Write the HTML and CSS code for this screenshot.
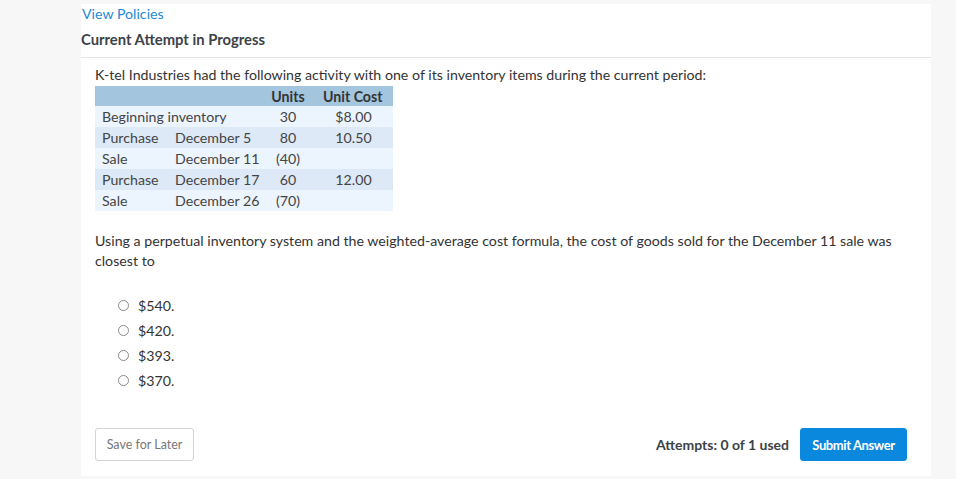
FILE: index.html
```html
<!DOCTYPE html>
<html>
<head>
<meta charset="utf-8">
<link rel="stylesheet" href="styles.css">
</head>
<body>
<div class="card">
  <div class="head">
    <a class="policies" href="#">View Policies</a>
    <div class="title">Current Attempt in Progress</div>
  </div>
  <div class="body">
    <p class="intro">K-tel Industries had the following activity with one of its inventory items during the current period:</p>
    <table class="inv">
      <colgroup><col class="c1"><col class="c2"><col class="c3"><col class="c4"></colgroup>
      <thead>
        <tr><th></th><th></th><th>Units</th><th>Unit Cost</th></tr>
      </thead>
      <tbody>
        <tr><td colspan="2">Beginning inventory</td><td class="n">30</td><td class="n">$8.00</td></tr>
        <tr><td>Purchase</td><td>December 5</td><td class="n">80</td><td class="n">10.50</td></tr>
        <tr><td>Sale</td><td>December 11</td><td class="n">(40)</td><td class="n"></td></tr>
        <tr><td>Purchase</td><td>December 17</td><td class="n">60</td><td class="n">12.00</td></tr>
        <tr><td>Sale</td><td>December 26</td><td class="n">(70)</td><td class="n"></td></tr>
      </tbody>
    </table>
    <p class="question">Using a perpetual inventory system and the weighted-average cost formula, the cost of goods sold for the December 11 sale was closest to</p>
    <ul class="options">
      <li><span class="radio"></span>$540.</li>
      <li><span class="radio"></span>$420.</li>
      <li><span class="radio"></span>$393.</li>
      <li><span class="radio"></span>$370.</li>
    </ul>
    <div class="footer">
      <button class="save">Save for Later</button>
      <div class="right">
        <span class="attempts">Attempts: 0 of 1 used</span>
        <button class="submit">Submit Answer</button>
      </div>
    </div>
  </div>
</div>
</body>
</html>
```

FILE: styles.css
```css
html, body {
  margin: 0;
  padding: 0;
  background: #f7f7f7;
}
body {
  font-family: Lato, "Open Sans", Arial, sans-serif;
  font-size: 14.2px;
  color: #333;
  padding: 4px 25px 3px 81px;
}
.card {
  background: #fff;
  width: 850px;
  height: 472px;
  display: flex;
  flex-direction: column;
}
.head {
  padding: 1px 0 0 1px;
  border-bottom: 1px solid #e5e5e5;
  box-sizing: border-box;
  height: 54px;
}
.policies {
  display: block;
  color: #1b8ad6;
  text-decoration: none;
  line-height: 17px;
}
.title {
  margin-top: 9px;
  font-weight: bold;
  font-size: 14.8px;
  color: #3d4247;
  line-height: 17px;
  margin-left: -1px;
}
.body {
  padding: 7px 14px 0 14px;
  flex: 1;
  display: flex;
  flex-direction: column;
}
.intro {
  margin: 0;
  line-height: 19px;
  color: #333;
}
.inv {
  border-collapse: collapse;
  table-layout: fixed;
  width: 298px;
  margin-top: 2px;
  color: #444;
}
.inv col.c1 { width: 73px; }
.inv col.c2 { width: 94px; }
.inv col.c3 { width: 52px; }
.inv col.c4 { width: 79px; }
.inv th {
  background: #a3c5de;
  height: 20px;
  padding: 0;
  font-weight: bold;
  color: #333;
  text-align: center;
  white-space: nowrap;
}
.inv th:last-child { text-align: left; padding-left: 9px; }
.inv td {
  height: 21px;
  padding: 0 0 0 7px;
  white-space: nowrap;
}
.inv td.n { text-align: center; padding: 0; }
.inv tbody tr:nth-child(odd) { background: #ecf4fe; }
.inv tbody tr:nth-child(even) { background: #dde9f7; }
.question {
  margin: 20px 0 0 0;
  line-height: 20px;
  color: #333;
}
.options {
  list-style: none;
  margin: 22px 0 0 0;
  padding: 0 0 0 23px;
}
.options li {
  display: flex;
  align-items: center;
  height: 25px;
  color: #333;
}
.radio {
  width: 9px;
  height: 9px;
  border: 1px solid #8a8a8a;
  border-radius: 50%;
  margin-right: 9px;
  background: #fff;
}
.footer {
  margin-top: auto;
  margin-bottom: 15px;
  display: flex;
  justify-content: space-between;
  align-items: center;
  padding-right: 10px;
}
button {
  font-family: Lato, "Open Sans", Arial, sans-serif;
  height: 33px;
  border-radius: 3px;
  cursor: pointer;
}
.save {
  width: 99px;
  background: #fff;
  border: 1px solid #d4d4d4;
  color: #777;
  font-size: 12.5px;
  padding: 0;
}
.right {
  display: flex;
  align-items: center;
  gap: 11px;
}
.attempts {
  font-weight: bold;
  color: #3d4247;
  font-size: 14px;
}
.submit {
  width: 107px;
  background: #0a88dd;
  border: 1px solid #0a88dd;
  color: #fff;
  font-weight: bold;
  font-size: 13px;
  letter-spacing: -0.4px;
  padding: 0;
}
```
